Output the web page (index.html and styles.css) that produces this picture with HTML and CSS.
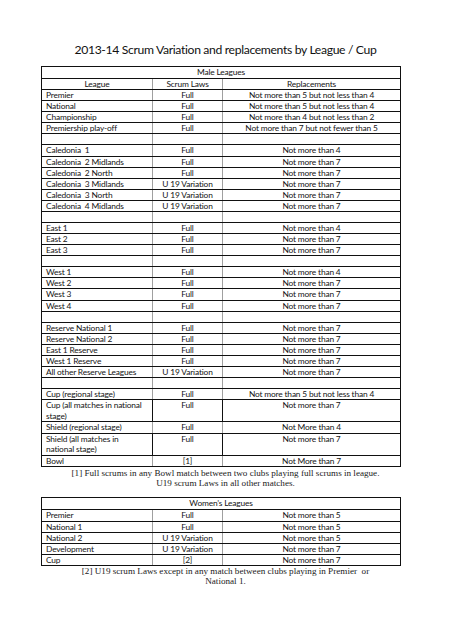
FILE: index.html
```html
<!DOCTYPE html>
<html>
<head>
<meta charset="utf-8">
<link rel="stylesheet" href="styles.css">
</head>
<body>
<div class="page">
  <h1 class="title">2013-14 Scrum Variation and replacements by League / Cup</h1>

  <div class="tbl male">
    <div class="row span"><div class="cell">Male Leagues</div></div>
    <div class="row"><div class="c1 mid">League</div><div class="c2">Scrum Laws</div><div class="c3">Replacements</div></div>
    <div class="row"><div class="c1">Premier</div><div class="c2">Full</div><div class="c3">Not more than 5 but not less than 4</div></div>
    <div class="row"><div class="c1">National</div><div class="c2">Full</div><div class="c3">Not more than 5 but not less than 4</div></div>
    <div class="row"><div class="c1">Championship</div><div class="c2">Full</div><div class="c3">Not more than 4 but not less than 2</div></div>
    <div class="row"><div class="c1">Premiership play-off</div><div class="c2">Full</div><div class="c3">Not more than 7 but not fewer than 5</div></div>
    <div class="row"><div class="c1"></div><div class="c2"></div><div class="c3"></div></div>
    <div class="row"><div class="c1">Caledonia&nbsp; 1</div><div class="c2">Full</div><div class="c3">Not more than 4</div></div>
    <div class="row"><div class="c1">Caledonia&nbsp; 2 Midlands</div><div class="c2">Full</div><div class="c3">Not more than 7</div></div>
    <div class="row"><div class="c1">Caledonia&nbsp; 2 North</div><div class="c2">Full</div><div class="c3">Not more than 7</div></div>
    <div class="row"><div class="c1">Caledonia&nbsp; 3 Midlands</div><div class="c2">U 19 Variation</div><div class="c3">Not more than 7</div></div>
    <div class="row"><div class="c1">Caledonia&nbsp; 3 North</div><div class="c2">U 19 Variation</div><div class="c3">Not more than 7</div></div>
    <div class="row"><div class="c1">Caledonia&nbsp; 4 Midlands</div><div class="c2">U 19 Variation</div><div class="c3">Not more than 7</div></div>
    <div class="row"><div class="c1"></div><div class="c2"></div><div class="c3"></div></div>
    <div class="row"><div class="c1">East 1</div><div class="c2">Full</div><div class="c3">Not more than 4</div></div>
    <div class="row"><div class="c1">East 2</div><div class="c2">Full</div><div class="c3">Not more than 7</div></div>
    <div class="row"><div class="c1">East 3</div><div class="c2">Full</div><div class="c3">Not more than 7</div></div>
    <div class="row"><div class="c1"></div><div class="c2"></div><div class="c3"></div></div>
    <div class="row"><div class="c1">West 1</div><div class="c2">Full</div><div class="c3">Not more than 4</div></div>
    <div class="row"><div class="c1">West 2</div><div class="c2">Full</div><div class="c3">Not more than 7</div></div>
    <div class="row"><div class="c1">West 3</div><div class="c2">Full</div><div class="c3">Not more than 7</div></div>
    <div class="row"><div class="c1">West 4</div><div class="c2">Full</div><div class="c3">Not more than 7</div></div>
    <div class="row"><div class="c1"></div><div class="c2"></div><div class="c3"></div></div>
    <div class="row"><div class="c1">Reserve National 1</div><div class="c2">Full</div><div class="c3">Not more than 7</div></div>
    <div class="row"><div class="c1">Reserve National 2</div><div class="c2">Full</div><div class="c3">Not more than 7</div></div>
    <div class="row"><div class="c1">East 1 Reserve</div><div class="c2">Full</div><div class="c3">Not more than 7</div></div>
    <div class="row"><div class="c1">West 1 Reserve</div><div class="c2">Full</div><div class="c3">Not more than 7</div></div>
    <div class="row"><div class="c1">All other Reserve Leagues</div><div class="c2">U 19 Variation</div><div class="c3">Not more than 7</div></div>
    <div class="row"><div class="c1"></div><div class="c2"></div><div class="c3"></div></div>
    <div class="row"><div class="c1">Cup (regional stage)</div><div class="c2">Full</div><div class="c3">Not more than 5 but not less than 4</div></div>
    <div class="row dark"><div class="c1">Cup (all matches in national stage)</div><div class="c2">Full</div><div class="c3">Not more than 7</div></div>
    <div class="row"><div class="c1">Shield (regional stage)</div><div class="c2">Full</div><div class="c3">Not More than 4</div></div>
    <div class="row dark"><div class="c1">Shield (all matches in national&nbsp;stage)</div><div class="c2">Full</div><div class="c3">Not more than 7</div></div>
    <div class="row"><div class="c1">Bowl</div><div class="c2">[1]</div><div class="c3">Not More than 7</div></div>
  </div>
  <p class="note note1">[1] Full scrums in any Bowl match between two clubs playing full scrums in league.<br>U19 scrum Laws in all other matches.</p>

  <div class="tbl women">
    <div class="row span"><div class="cell">Women’s Leagues</div></div>
    <div class="row"><div class="c1">Premier</div><div class="c2">Full</div><div class="c3">Not more than 5</div></div>
    <div class="row"><div class="c1">National 1</div><div class="c2">Full</div><div class="c3">Not more than 5</div></div>
    <div class="row"><div class="c1">National 2</div><div class="c2">U 19 Variation</div><div class="c3">Not more than 5</div></div>
    <div class="row"><div class="c1">Development</div><div class="c2">U 19 Variation</div><div class="c3">Not more than 7</div></div>
    <div class="row"><div class="c1">Cup</div><div class="c2">[2]</div><div class="c3">Not more than 7</div></div>
  </div>
  <p class="note note2">[2] U19 scrum Laws except in any match between clubs playing in Premier&nbsp; or<br>National 1.</p>
</div>
</body>
</html>
```

FILE: styles.css
```css
html, body {
  margin: 0;
  padding: 0;
  background: #ffffff;
}

.page {
  width: 451px;
  height: 640px;
  overflow: hidden;
  color: #141414;
  font-family: Lato, "Open Sans", sans-serif;
}

.title {
  margin: 0;
  padding-top: 41px;
  height: 25px;
  font-size: 12.2px;
  font-weight: normal;
  line-height: 17px;
  text-align: center;
  color: #111111;
  letter-spacing: -0.35px;
}

.tbl {
  box-sizing: border-box;
  width: 360px;
  margin-left: 41px;
  border-left: 1px solid #111;
  border-right: 1px solid #111;
  border-top: 1px solid #111;
  font-size: 8.4px;
  letter-spacing: -0.17px;
  line-height: 10.08px;
}

.row {
  display: grid;
  grid-template-columns: 111px 70px 1fr;
  border-bottom: 1px solid #111;
}

.row.span {
  display: block;
  text-align: center;
  line-height: 11px;
}

.c1, .c2, .c3 {
  box-sizing: border-box;
  min-height: 10.08px;
}

.c1 {
  padding-left: 4px;
  border-right: 1px solid #a0a0a0;
}

.c1.mid {
  padding-left: 0;
  text-align: center;
}

.c2 {
  text-align: center;
  border-right: 1px solid #a0a0a0;
}

.c3 {
  text-align: center;
}

.row.dark .c1,
.row.dark .c2 {
  border-right-color: #111;
}

.row.dark .c1 {
  padding-right: 3px;
  line-height: 10.6px;
}

.note {
  margin: 0;
  text-align: center;
  font-family: "Liberation Serif", serif;
  font-size: 9.15px;
  line-height: 10px;
  color: #1a1a1a;
}

.note1 {
  padding-top: 1px;
  height: 29px;
}

.women .span {
  line-height: 11.6px;
}

.women .row {
  min-height: 10.2px;
}

.note2 {
  padding-top: 0;
}
```
